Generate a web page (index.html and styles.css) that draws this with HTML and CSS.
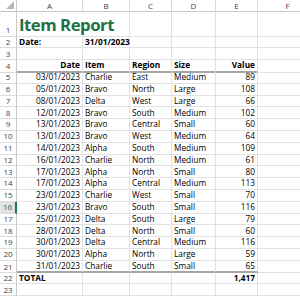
FILE: index.html
```html
<!DOCTYPE html>
<html>
<head>
<meta charset="utf-8">
<link rel="stylesheet" href="styles.css">
</head>
<body>
<div class="sheet">
  <div class="row colhead">
    <div class="corner"><span class="tri"></span></div>
    <div class="ch">A</div><div class="ch">B</div><div class="ch">C</div><div class="ch">D</div><div class="ch">E</div><div class="ch">F</div>
  </div>
  <div class="row title-row">
    <div class="rh">1</div>
    <div class="c title span2">Item Report</div><div class="c"></div><div class="c"></div><div class="c"></div><div class="c"></div>
  </div>
  <div class="row">
    <div class="rh">2</div>
    <div class="c b">Date:</div><div class="c b">31/01/2023</div><div class="c"></div><div class="c"></div><div class="c"></div><div class="c"></div>
  </div>
  <div class="row">
    <div class="rh">3</div>
    <div class="c"></div><div class="c"></div><div class="c"></div><div class="c"></div><div class="c"></div><div class="c"></div>
  </div>
  <div class="row head">
    <div class="rh">4</div>
    <div class="c b r ul">Date</div><div class="c b ul">Item</div><div class="c b ul">Region</div><div class="c b ul">Size</div><div class="c b r ul">Value</div><div class="c"></div>
  </div>
  <div class="row"><div class="rh">5</div><div class="c r">03/01/2023</div><div class="c">Charlie</div><div class="c">East</div><div class="c">Medium</div><div class="c r">89</div><div class="c"></div></div>
  <div class="row"><div class="rh">6</div><div class="c r">05/01/2023</div><div class="c">Bravo</div><div class="c">North</div><div class="c">Large</div><div class="c r">108</div><div class="c"></div></div>
  <div class="row"><div class="rh">7</div><div class="c r">08/01/2023</div><div class="c">Delta</div><div class="c">West</div><div class="c">Large</div><div class="c r">66</div><div class="c"></div></div>
  <div class="row"><div class="rh">8</div><div class="c r">12/01/2023</div><div class="c">Bravo</div><div class="c">South</div><div class="c">Medium</div><div class="c r">102</div><div class="c"></div></div>
  <div class="row"><div class="rh">9</div><div class="c r">13/01/2023</div><div class="c">Bravo</div><div class="c">Central</div><div class="c">Small</div><div class="c r">60</div><div class="c"></div></div>
  <div class="row"><div class="rh">10</div><div class="c r">13/01/2023</div><div class="c">Bravo</div><div class="c">West</div><div class="c">Medium</div><div class="c r">64</div><div class="c"></div></div>
  <div class="row"><div class="rh">11</div><div class="c r">14/01/2023</div><div class="c">Alpha</div><div class="c">South</div><div class="c">Medium</div><div class="c r">109</div><div class="c"></div></div>
  <div class="row"><div class="rh">12</div><div class="c r">16/01/2023</div><div class="c">Charlie</div><div class="c">North</div><div class="c">Medium</div><div class="c r">61</div><div class="c"></div></div>
  <div class="row"><div class="rh">13</div><div class="c r">17/01/2023</div><div class="c">Alpha</div><div class="c">North</div><div class="c">Small</div><div class="c r">80</div><div class="c"></div></div>
  <div class="row"><div class="rh">14</div><div class="c r">17/01/2023</div><div class="c">Alpha</div><div class="c">Central</div><div class="c">Medium</div><div class="c r">113</div><div class="c"></div></div>
  <div class="row"><div class="rh">15</div><div class="c r">23/01/2023</div><div class="c">Charlie</div><div class="c">West</div><div class="c">Small</div><div class="c r">70</div><div class="c"></div></div>
  <div class="row"><div class="rh active">16</div><div class="c r">23/01/2023</div><div class="c">Bravo</div><div class="c">South</div><div class="c">Small</div><div class="c r">116</div><div class="c"></div></div>
  <div class="row"><div class="rh">17</div><div class="c r">25/01/2023</div><div class="c">Delta</div><div class="c">South</div><div class="c">Large</div><div class="c r">79</div><div class="c"></div></div>
  <div class="row"><div class="rh">18</div><div class="c r">28/01/2023</div><div class="c">Delta</div><div class="c">North</div><div class="c">Small</div><div class="c r">60</div><div class="c"></div></div>
  <div class="row"><div class="rh">19</div><div class="c r">30/01/2023</div><div class="c">Delta</div><div class="c">Central</div><div class="c">Medium</div><div class="c r">116</div><div class="c"></div></div>
  <div class="row"><div class="rh">20</div><div class="c r">30/01/2023</div><div class="c">Alpha</div><div class="c">North</div><div class="c">Large</div><div class="c r">59</div><div class="c"></div></div>
  <div class="row"><div class="rh">21</div><div class="c r ul">31/01/2023</div><div class="c ul">Charlie</div><div class="c ul">South</div><div class="c ul">Small</div><div class="c r ul">65</div><div class="c"></div></div>
  <div class="row total">
    <div class="rh">22</div>
    <div class="c b">TOTAL</div><div class="c"></div><div class="c"></div><div class="c"></div><div class="c b r">1,417</div><div class="c"></div>
  </div>
  <div class="row">
    <div class="rh">23</div>
    <div class="c"></div><div class="c"></div><div class="c"></div><div class="c"></div><div class="c"></div><div class="c"></div>
  </div>
</div>
</body>
</html>
```
FILE: styles.css
```css
html, body {
  margin: 0;
  padding: 0;
  background: #ffffff;
}
.sheet {
  width: 300px;
  height: 297px;
  overflow: hidden;
  font-family: "Open Sans", "Liberation Sans", sans-serif;
  font-size: 8.3px;
  color: #000;
}
.row {
  display: grid;
  grid-template-columns: 17px 66px 47px 42px 44px 42px 60px;
  height: 11.8px;
  box-sizing: border-box;
}
.colhead {
  height: 12px;
}
.title-row {
  height: 24.6px;
}
.corner {
  position: relative;
  background: #fff;
  border-right: 1px solid #d0d0d0;
  border-bottom: 1px solid #c8c8c8;
}
.tri {
  position: absolute;
  right: 2px;
  bottom: 2px;
  width: 0;
  height: 0;
  border-left: 8px solid transparent;
  border-bottom: 8px solid #b8b8b8;
}
.ch {
  border-right: 1px solid #d8d8d8;
  border-bottom: 1px solid #c8c8c8;
  color: #444;
  text-align: center;
  line-height: 11px;
  font-size: 8px;
}
.rh {
  border-right: 1px solid #c8c8c8;
  border-bottom: 1px solid #dcdcdc;
  color: #444;
  text-align: center;
  display: flex;
  align-items: flex-end;
  justify-content: center;
  padding-bottom: 0.5px;
  box-sizing: border-box;
  line-height: 10px;
  font-size: 8px;
}
.rh.active {
  background: #e2e2e2;
  color: #217346;
  border-right: 2px solid #217346;
}
.c {
  border-right: 1px solid #e2e2e2;
  border-bottom: 1px solid #e2e2e2;
  box-sizing: border-box;
  white-space: nowrap;
  overflow: visible;
  display: flex;
  align-items: flex-end;
  padding: 0 2px 0 2px;
  line-height: 10.5px;
  min-width: 0;
}
.c.r {
  justify-content: flex-end;
}
.c.b {
  font-weight: bold;
}
.title {
  color: #1e7145;
  font-weight: bold;
  font-size: 16.8px;
  line-height: 22px;
  letter-spacing: -0.5px;
}
.span2 {
  grid-column: span 2;
}
.ul {
  border-bottom: 2px solid #a6a6a6;
}
```
